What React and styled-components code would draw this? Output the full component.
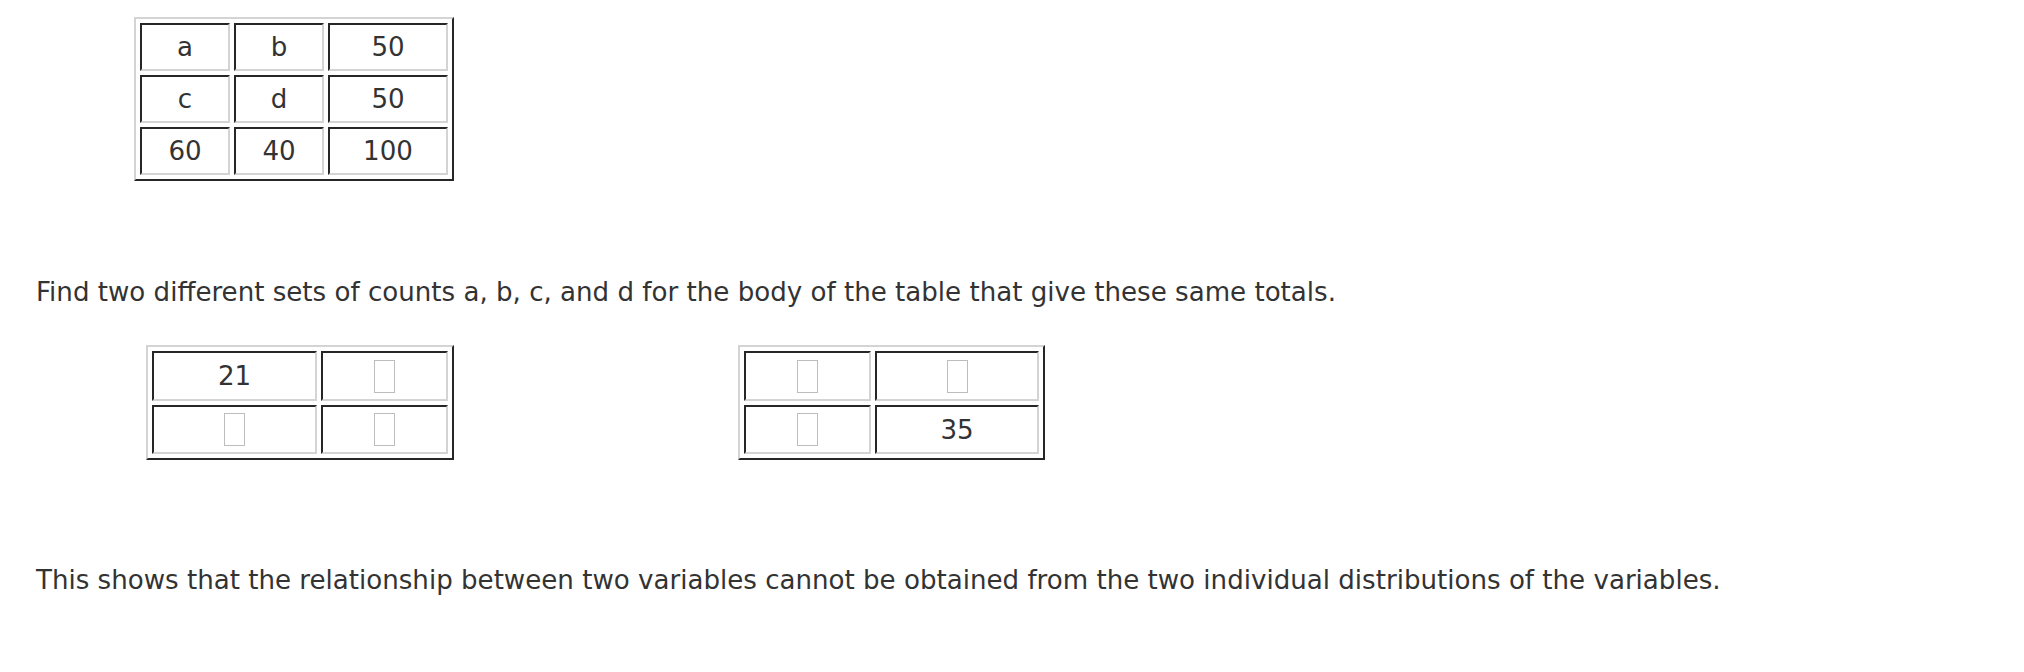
import React from "react";
import styled, { createGlobalStyle } from "styled-components";

const Global = createGlobalStyle`
  html, body { margin: 0; padding: 0; background: #fff; }
  body { font-family: "DejaVu Sans", Verdana, sans-serif; color: #333; }
`;

const Page = styled.div`
  width: 2024px;
  height: 672px;
  box-sizing: border-box;
  padding: 17px 0 0 36px;
  display: flex;
  flex-direction: column;
  align-items: flex-start;
`;

const Table = styled.table`
  border-collapse: separate;
  border-spacing: 4px;
  border-style: solid;
  border-width: 2px;
  border-color: #d4d4d4 #262626 #262626 #d4d4d4;
  margin-left: ${(p) => p.$ml || 0}px;
`;

const Cell = styled.td`
  box-sizing: border-box;
  border-style: solid;
  border-width: 2px;
  border-color: #262626 #d4d4d4 #d4d4d4 #262626;
  width: ${(p) => p.$w}px;
  height: ${(p) => p.$h}px;
  padding: 0;
  text-align: center;
  vertical-align: middle;
  font-size: 26.1px;
  line-height: 30px;
  color: #333;
`;

const Blank = styled.span`
  display: inline-block;
  box-sizing: border-box;
  width: 21px;
  height: 33px;
  border: 1px solid #bdbdbd;
  vertical-align: middle;
`;

const Text = styled.p`
  margin: ${(p) => p.$mt}px 0 0 0;
  font-size: 26.1px;
  line-height: 31px;
  color: #333;
  white-space: nowrap;
`;

const TablesRow = styled.div`
  display: flex;
  align-items: flex-start;
  gap: 284px;
  margin: 37px 0 0 110px;
`;

export default function App() {
  const w1 = [90, 90, 120];
  const t1 = [
    ["a", "b", "50"],
    ["c", "d", "50"],
    ["60", "40", "100"],
  ];
  return (
    <>
      <Global />
      <Page>
        <Table $ml={98}>
          <tbody>
            {t1.map((row, i) => (
              <tr key={i}>
                {row.map((v, j) => (
                  <Cell key={j} $w={w1[j]} $h={48}>
                    {v}
                  </Cell>
                ))}
              </tr>
            ))}
          </tbody>
        </Table>
        <Text $mt={96}>
          Find two different sets of counts a, b, c, and d for the body of the table that give these same totals.
        </Text>
        <TablesRow>
          <Table>
            <tbody>
              <tr>
                <Cell $w={165} $h={50}>21</Cell>
                <Cell $w={127} $h={50}><Blank /></Cell>
              </tr>
              <tr>
                <Cell $w={165} $h={49}><Blank /></Cell>
                <Cell $w={127} $h={49}><Blank /></Cell>
              </tr>
            </tbody>
          </Table>
          <Table>
            <tbody>
              <tr>
                <Cell $w={127} $h={50}><Blank /></Cell>
                <Cell $w={164} $h={50}><Blank /></Cell>
              </tr>
              <tr>
                <Cell $w={127} $h={49}><Blank /></Cell>
                <Cell $w={164} $h={49}>35</Cell>
              </tr>
            </tbody>
          </Table>
        </TablesRow>
        <Text $mt={105}>
          This shows that the relationship between two variables cannot be obtained from the two individual distributions of the variables.
        </Text>
      </Page>
    </>
  );
}
